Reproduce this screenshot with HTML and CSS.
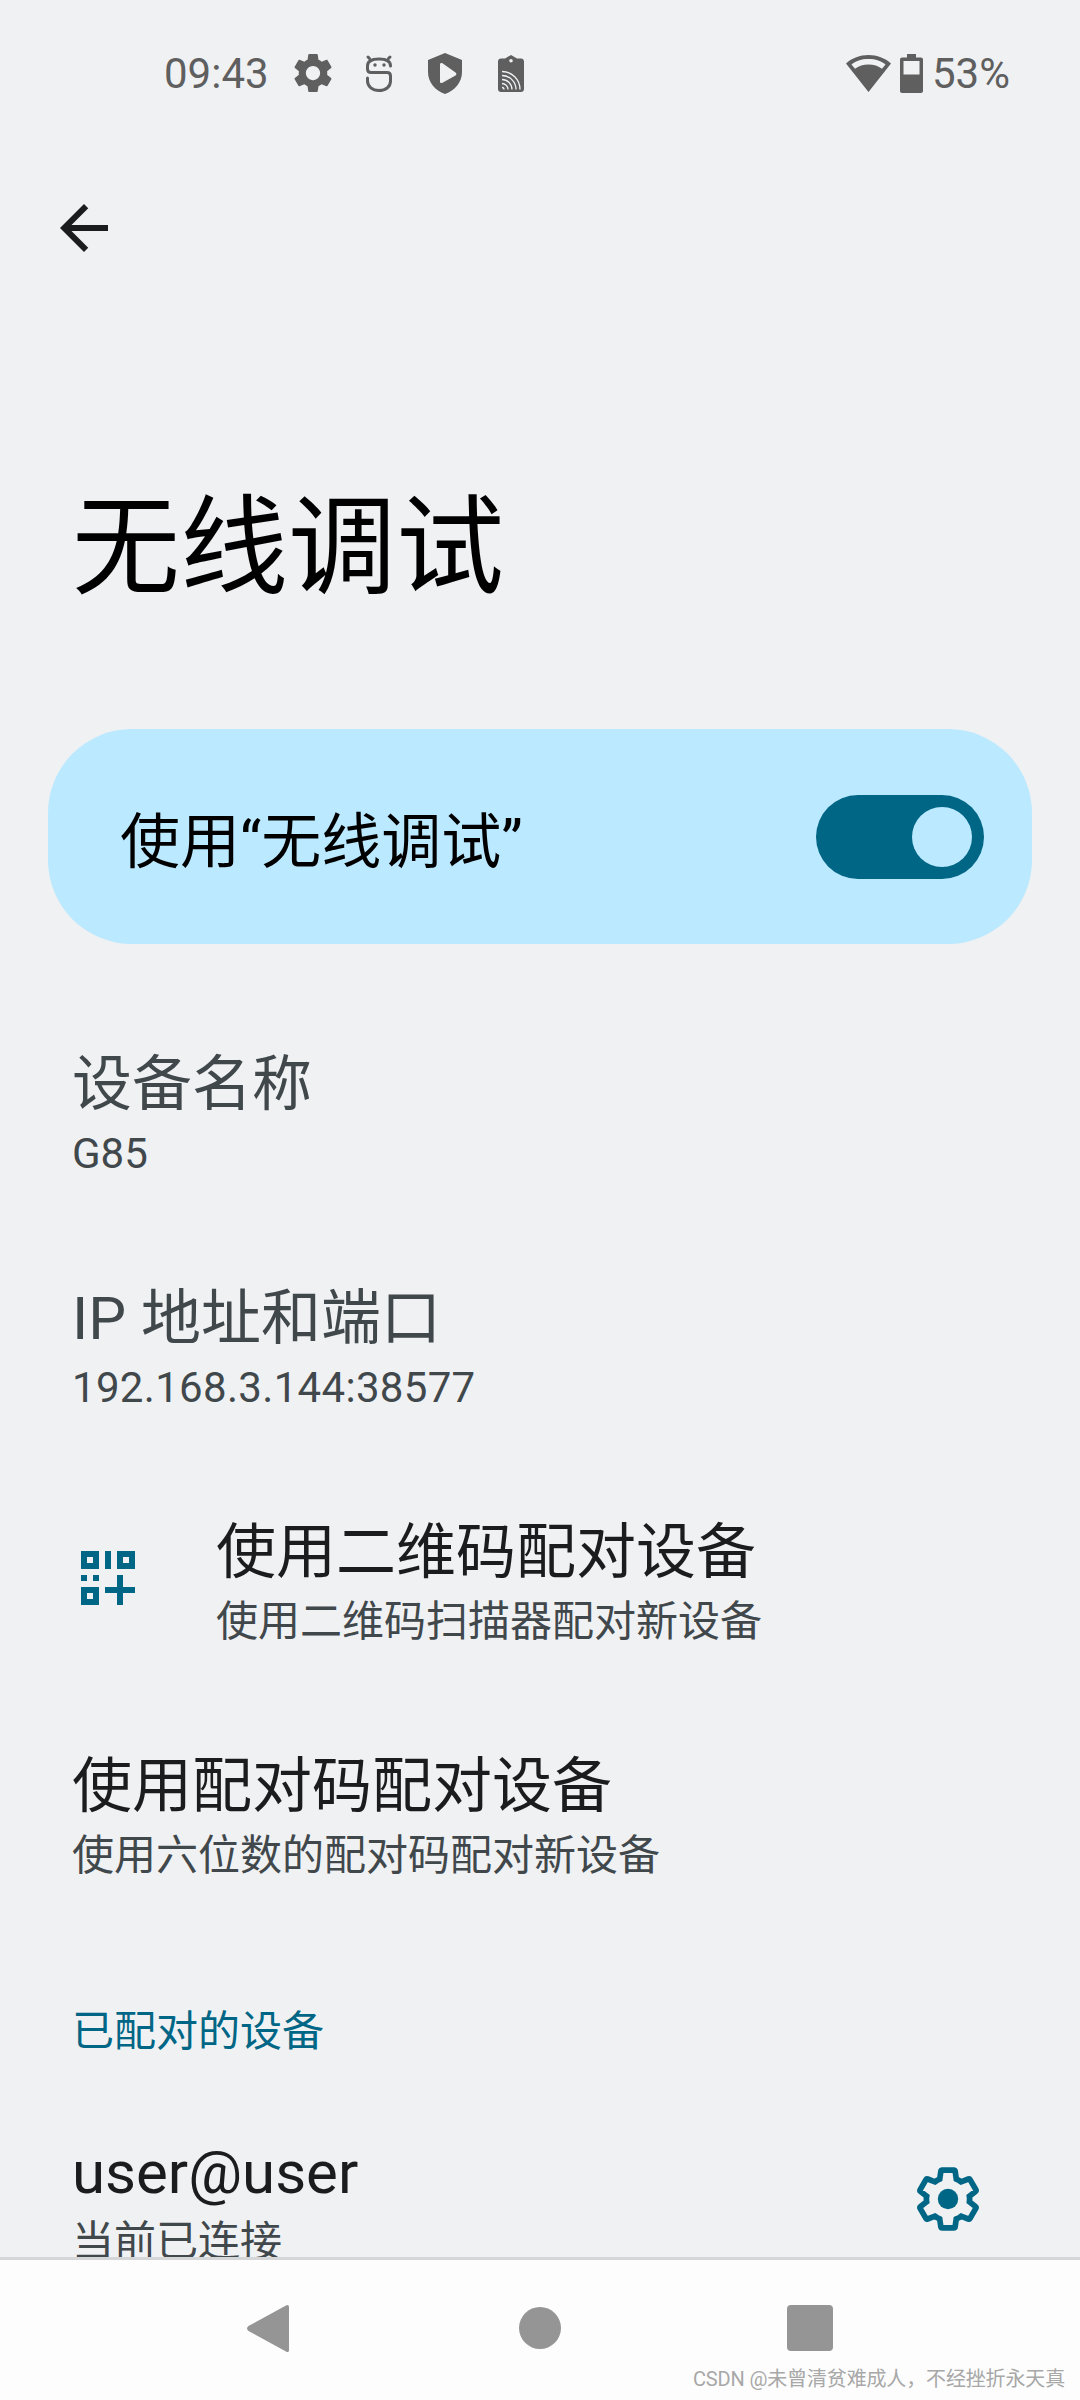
FILE: index.html
```html
<!DOCTYPE html>
<html lang="zh-CN">
<head>
<meta charset="utf-8">
<title>无线调试</title>
<link rel="stylesheet" href="styles.css">
</head>
<body>
<div class="screen">
  <main class="content">
    <header class="status">
      <span class="time">09:43</span>
      <div class="status-icons">
        <svg class="ic-gear" viewBox="2.4 2.4 19.2 19.2"><path d="M19.14 12.94c.04-.3.06-.61.06-.94 0-.32-.02-.64-.07-.94l2.03-1.58c.18-.14.23-.41.12-.61l-1.92-3.32c-.12-.22-.37-.29-.59-.22l-2.39.96c-.5-.38-1.03-.7-1.62-.94l-.36-2.54c-.04-.24-.24-.41-.48-.41h-3.84c-.24 0-.43.17-.47.41l-.36 2.54c-.59.24-1.13.57-1.62.94l-2.39-.96c-.22-.08-.47 0-.59.22L2.74 8.87c-.12.21-.08.47.12.61l2.03 1.58c-.05.3-.09.63-.09.94s.02.64.07.94l-2.03 1.58c-.18.14-.23.41-.12.61l1.92 3.32c.12.22.37.29.59.22l2.39-.96c.5.38 1.03.7 1.62.94l.36 2.54c.05.24.24.41.48.41h3.84c.24 0 .44-.17.47-.41l.36-2.54c.59-.24 1.13-.56 1.62-.94l2.39.96c.22.08.47 0 .59-.22l1.92-3.32c.12-.22.07-.47-.12-.61l-2.01-1.58zM12 15.6c-1.98 0-3.6-1.62-3.6-3.6s1.62-3.6 3.6-3.6 3.6 1.62 3.6 3.6-1.62 3.6-3.6 3.6z"/></svg>
        <svg class="ic-robot" viewBox="0 0 28 38"><path class="line" d="M25.500 12C25.500 7.500 21 5 14 5S2.500 7.500 2.500 12v3c0 2 1 3.500 3.500 3.500H22c2.500 0 3.500 1.500 3.500 3.500v5c0 6-5 9.500-11.500 9.500S2.500 32.500 2.500 27v-3"/><path class="line" d="M3 3l1.500 1.500M25 3l-1.500 1.500"/><circle cx="10" cy="11" r="1.700"/><circle cx="19" cy="11" r="1.700"/></svg>
        <svg class="ic-shield" viewBox="0 0 34 41"><path fill-rule="evenodd" d="M17 0 34 7v12c0 10-7 18.500-17 22C7 37.500 0 29 0 19V7zM12 11.500v17c0 1.500 1.200 2 2.500 1.300l13-7.300c1.200-.8 1.200-2.200 0-3l-13-9.200c-1.300-.8-2.500-.3-2.500 1.200z"/></svg>
        <svg class="ic-tag" viewBox="0 0 26 37"><path fill-rule="evenodd" d="M13 0 19 3.500h4c1.700 0 3 1.300 3 3V34c0 1.700-1.300 3-3 3H3c-1.700 0-3-1.300-3-3V6.500c0-1.700 1.300-3 3-3h4zM13 4a1.800 1.800 0 1 0 0 3.600A1.800 1.800 0 0 0 13 4z"/><path class="waves" d="M4 32.500a2 2 0 0 1 2 2M4 28.500a6 6 0 0 1 6 6M4 24.500a10 10 0 0 1 10 10M4 20.500a14 14 0 0 1 14 14M4 16.500a18 18 0 0 1 18 18"/></svg>
      </div>
      <div class="status-right">
        <svg class="ic-wifi" viewBox="0 0 45 37"><path fill-rule="evenodd" d="M22.500 0C31 0 39 3 45 8.500L22.500 37 0 8.500C6 3 14 0 22.500 0zM22.500 4C15.500 4 9.500 6 5.500 9.500l3.500 4.300c3.500-2.800 8.500-4.300 13.500-4.300s10 1.500 13.500 4.300l3.500-4.300C35.500 6 29.500 4 22.500 4z"/></svg>
        <svg class="ic-batt" viewBox="0 0 23 39"><path fill-rule="evenodd" d="M7 0h9v3.500h5c1.100 0 2 .9 2 2V37c0 1.100-.9 2-2 2H2c-1.100 0-2-.9-2-2V5.500c0-1.100.9-2 2-2h5zM3.500 7v13.500h16V7z"/></svg>
        <span class="pct">53%</span>
      </div>
    </header>

    <div class="toolbar">
      <svg class="ic-back" viewBox="0 0 24 24"><path d="M20 11H7.830l5.590-5.590L12 4l-8 8 8 8 1.410-1.410L7.830 13H20v-2z"/></svg>
    </div>

    <h1 class="title">无线调试</h1>

    <section class="main-card">
      <span class="main-label">使用“无线调试”</span>
      <div class="switch"><div class="thumb"></div></div>
    </section>

    <div class="list">
      <div class="row">
        <div class="row-text">
          <div class="row-title muted">设备名称</div>
          <div class="row-sub">G85</div>
        </div>
      </div>
      <div class="row">
        <div class="row-text">
          <div class="row-title muted">IP 地址和端口</div>
          <div class="row-sub row-num">192.168.3.144:38577</div>
        </div>
      </div>
      <div class="row">
        <svg class="ic-qr" viewBox="0 0 9 9" shape-rendering="crispEdges">
          <path fill-rule="evenodd" d="M0 0h3v3H0zM1 1v1h1V1zM4 0h1v3H4zM6 0h3v3H6zM7 1v1h1V1zM0 4h1v1H0zM2 4h1v1H2zM0 6h3v3H0zM1 7v1h1V7zM6 4h1v2h2v1H7v2H6V7H4V6h2z"/>
        </svg>
        <div class="row-text">
          <div class="row-title">使用二维码配对设备</div>
          <div class="row-sub">使用二维码扫描器配对新设备</div>
        </div>
      </div>
      <div class="row">
        <div class="row-text">
          <div class="row-title">使用配对码配对设备</div>
          <div class="row-sub">使用六位数的配对码配对新设备</div>
        </div>
      </div>
      <div class="section-head">已配对的设备</div>
      <div class="row row-device">
        <div class="row-text">
          <div class="row-title">user@user</div>
          <div class="row-sub">当前已连接</div>
        </div>
        <svg class="ic-cog" viewBox="0 0 24 24"><path class="cog-line" d="M19.140 12.940c.040-.300.060-.610.060-.940 0-.320-.020-.640-.070-.940l2.030-1.580c.180-.140.230-.410.120-.610l-1.920-3.320c-.120-.220-.370-.290-.590-.220l-2.390.960c-.500-.380-1.030-.700-1.620-.940l-.360-2.540c-.040-.240-.240-.410-.480-.410h-3.840c-.240 0-.430.170-.470.410l-.360 2.540c-.590.240-1.130.570-1.620.940l-2.390-.960c-.220-.080-.470 0-.590.220L2.740 8.870c-.120.210-.080.470.120.610l2.030 1.580c-.050.300-.090.630-.090.940s.020.640.070.940l-2.030 1.580c-.180.140-.230.410-.120.610l1.920 3.320c.120.220.370.290.590.220l2.390-.960c.500.380 1.030.700 1.620.940l.360 2.540c.050.240.240.410.480.410h3.840c.240 0 .440-.170.470-.410l.360-2.540c.590-.240 1.130-.560 1.620-.94l2.390.96c.22.080.47 0 .59-.22l1.920-3.320c.12-.22.070-.47-.12-.61l-2.010-1.58z"/><circle cx="12" cy="12" r="3.400"/></svg>
      </div>
    </div>
  </main>

  <nav class="navbar">
    <div class="nav-item"><svg class="nav-back" viewBox="0 0 42 49"><path d="M39 1.500c1.500-1.200 3-.5 3 1.500v43c0 2-1.500 2.700-3 1.500L1.500 27c-2-1.500-2-3.500 0-5z"/></svg></div>
    <div class="nav-item"><div class="nav-home"></div></div>
    <div class="nav-item"><div class="nav-recent"></div></div>
    <span class="watermark">CSDN @未曾清贫难成人，不经挫折永天真</span>
  </nav>
</div>
</body>
</html>
```
FILE: styles.css
```css
* { box-sizing: border-box; }
html, body { margin: 0; padding: 0; }
body {
  width: 1080px;
  height: 2400px;
  overflow: hidden;
  background: #f0f1f3;
  font-family: Roboto, "Noto Sans CJK SC", sans-serif;
}
.screen {
  width: 1080px;
  height: 2400px;
  display: flex;
  flex-direction: column;
  overflow: hidden;
}
.content { flex: 1 1 0; min-height: 0; overflow: hidden; }
.status {
  height: 146px;
  padding: 0 70px 0 164px;
  display: flex;
  align-items: center;
  color: #5f5f5f;
  font-size: 42px;
  fill: #5f5f5f;
}
.time { width: 130px; }
.status-icons { display: flex; align-items: center; }
.ic-gear { width: 38px; height: 38px; }
.ic-robot { width: 28px; height: 38px; margin-left: 33px; }
.ic-robot .line { fill: none; stroke: #5f5f5f; stroke-width: 3; stroke-linecap: round; }
.ic-shield { width: 34px; height: 41px; margin-left: 35px; }
.ic-tag { width: 26px; height: 37px; margin-left: 36px; }
.waves { fill: none; stroke: #f0f1f3; stroke-width: 1.300; }
.status-right { margin-left: auto; display: flex; align-items: center; }
.ic-wifi { width: 45px; height: 37px; }
.ic-batt { width: 23px; height: 39px; margin-left: 9px; }
.pct { margin-left: 9px; }

.toolbar { height: 164px; padding: 0 0 0 48px; display: flex; align-items: center; }
.ic-back { width: 72px; height: 72px; fill: #1a1c1e; }

.title {
  margin: 0;
  height: 419px;
  padding: 163px 0 0 72px;
  font-size: 108px;
  font-weight: 400;
  line-height: 150px;
  color: #000;
}

.main-card {
  height: 215px;
  margin: 0 48px;
  padding: 0 48px 0 72px;
  background: #bbe9ff;
  border-radius: 84px;
  display: flex;
  align-items: center;
  justify-content: space-between;
}
.main-label { font-size: 60px; color: #000; }
.switch {
  width: 168px;
  height: 84px;
  background: #006685;
  border-radius: 42px;
  display: flex;
  align-items: center;
  justify-content: flex-end;
  padding-right: 12px;
}
.thumb { width: 60px; height: 60px; border-radius: 50%; background: #bbe9ff; }

.list { padding-top: 58px; }
.row {
  height: 234px;
  padding: 0 48px 0 72px;
  display: flex;
  align-items: center;
}
.row-text { flex: 1 1 auto; min-width: 0; }
.row-title { font-size: 60px; line-height: 68px; color: #1a1c1e; white-space: nowrap; }
.row-title.muted { color: #41484c; }
.row-sub { font-size: 42px; line-height: 69px; color: #41484c; white-space: nowrap; }
.row-num { letter-spacing: 0.32px; }
.ic-qr { width: 54px; height: 54px; margin: 0 81px 18px 9px; fill: #006685; flex: none; }
.section-head {
  height: 152px;
  padding: 0 0 0 72px;
  font-size: 42px;
  line-height: 188px;
  color: #006685;
}
.ic-cog { width: 72px; height: 72px; margin: 0 48px 16px 0; flex: none; fill: #006685; }
.cog-line { fill: none; stroke: #006685; stroke-width: 1.900; }

.navbar {
  position: relative;
  flex: none;
  height: 143px;
  background: #fdfdfd;
  border-top: 3px solid #d5d6d8;
  display: flex;
  justify-content: center;
  align-items: flex-start;
  padding-top: 43px;
}
.nav-item { width: 270px; height: 50px; display: flex; justify-content: center; align-items: center; }
.nav-back { width: 42px; height: 49px; margin-left: -4px; fill: #959595; }
.nav-home { width: 42px; height: 42px; border-radius: 50%; background: #959595; }
.nav-recent { width: 46px; height: 46px; border-radius: 4px; background: #959595; }
.watermark {
  position: absolute;
  right: 15px;
  bottom: 9px;
  font-size: 20px;
  line-height: 24px;
  letter-spacing: -0.15px;
  color: #a8a8a8;
  white-space: nowrap;
}
```
